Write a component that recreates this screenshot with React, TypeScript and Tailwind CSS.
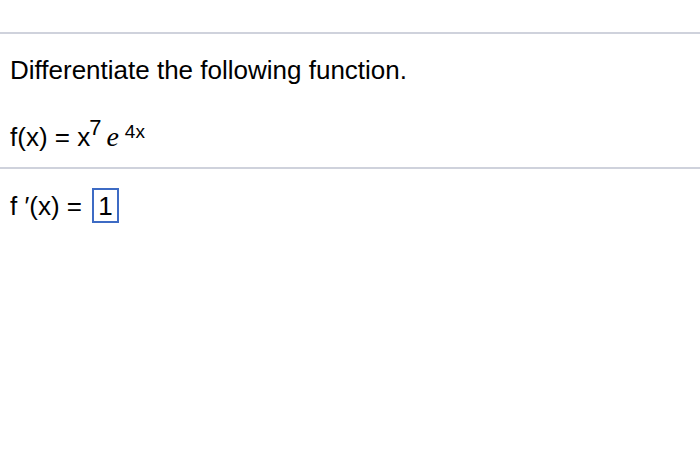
export default function App() {
  return (
    <div
      className="w-[700px] h-[468px] bg-white text-black"
      style={{ fontFamily: '"Liberation Sans", Arial, sans-serif' }}
    >
      <div className="h-[32px]" />
      <div className="h-[2px] bg-[#cfd2dc]" />
      <div className="px-[10px]">
        <p className="pt-[21px] text-[26px] leading-[30px]">
          Differentiate the following function.
        </p>
        <div className="mt-[37px] mb-[15px] h-[30px] flex items-baseline text-[26px] leading-[30px]">
          <span>f(x) = x</span>
          <span className="-ml-[1px] text-[22px] relative -top-[11px]">7</span>
          <span className="ml-[5px] italic text-[28px]" style={{ fontFamily: '"Liberation Serif", "Times New Roman", serif' }}>
            e
          </span>
          <span className="ml-[6px] text-[19px] relative -top-[8px]">4x</span>
        </div>
      </div>
      <div className="h-[2px] bg-[#cfd2dc]" />
      <div className="px-[10px] pt-[19px] flex items-center text-[26px] leading-[30px]">
        <span>f ′(x) =</span>
        <span className="ml-[10px] w-[27px] h-[35px] border-[2px] border-[#3d6bc4] flex items-center justify-center">
          1
        </span>
      </div>
    </div>
  );
}
